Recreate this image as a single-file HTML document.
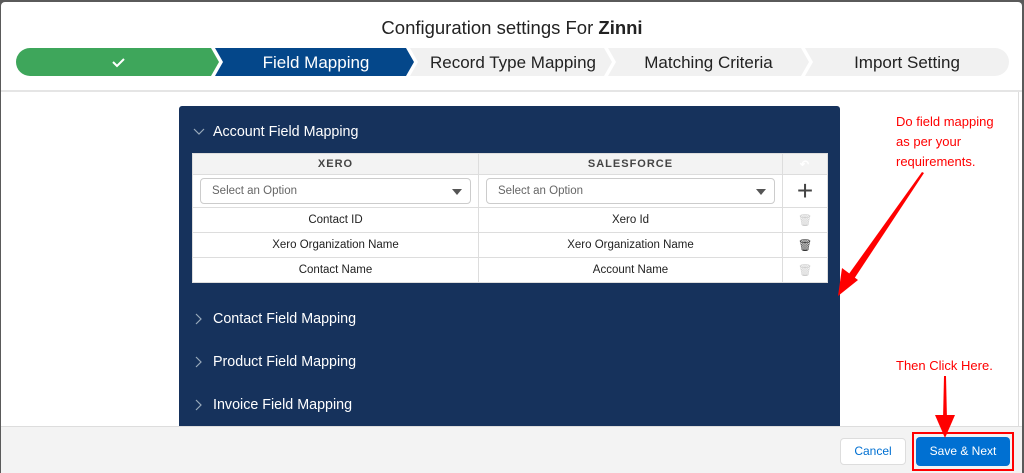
<!DOCTYPE html>
<html><head><style>
*{box-sizing:border-box;margin:0;padding:0}
body{width:1024px;height:473px;background:#5a5a5a;font-family:"Liberation Sans",sans-serif;position:relative;overflow:hidden}
.modal{position:absolute;left:1px;top:2px;width:1021px;height:471px;background:#fff;border-radius:4px 4px 0 0;overflow:hidden}
.title{position:absolute;top:15px;left:0;width:1022px;text-align:center;font-size:18.5px;color:#222}
.step{position:absolute;top:47px;height:28px;font-size:17px;line-height:28px;text-align:center}
.body{position:absolute;top:88px;left:0;width:1021px;height:336px;border-top:2px solid #e5e5e5}
.footer{position:absolute;top:424px;left:0;width:1021px;height:49px;background:#f3f3f3;border-top:1px solid #ddd}
.panel{position:absolute;left:178px;top:104px;width:661px;height:330px;background:#16325c;border-radius:3px}
.sec{position:absolute;left:34px;color:#fff;font-size:14.3px}
table{position:absolute;left:13px;top:47px;width:636px;border-collapse:collapse;background:#fff;font-size:11.5px;color:#222}
td,th{border:1px solid #ddd;text-align:center}
th{background:#f3f3f3;height:21px;font-size:11px;letter-spacing:1px;color:#444}
td{height:25px}
.sel{height:26px;margin:3px 7px;border:1px solid #ccc;border-radius:4px;text-align:left;padding-left:11px;line-height:24px;color:#666;font-size:11.5px;position:relative}
.sel:after{content:"";position:absolute;right:8px;top:10px;border:5px solid transparent;border-top:6px solid #555}
.red{position:absolute;color:#f00;font-size:13px;line-height:20px}
</style></head><body>
<div class="modal">
<div class="title">Configuration settings For <b>Zinni</b></div>
<svg style="position:absolute;left:0;top:0" width="1021" height="90">
<path d="M29 46 H210 L218 60 L210 74 H29 A14 14 0 0 1 29 46Z" fill="#3ea65b"/>
<path d="M112 60 l4 4 l7 -7" stroke="#fff" stroke-width="2" fill="none"/>
<path d="M214 46 H405 L413 60 L405 74 H214 L222 60Z" fill="#04478a"/>
<path d="M409 46 H603 L611 60 L603 74 H409 L417 60Z" fill="#f1f1f1"/>
<path d="M607 46 H800 L808 60 L800 74 H607 L615 60Z" fill="#f1f1f1"/>
<path d="M804 46 H994 A14 14 0 0 1 994 74 H804 L812 60Z" fill="#f1f1f1"/>
</svg>
<div class="step" style="left:218px;width:194px;color:#fff">Field Mapping</div>
<div class="step" style="left:413px;width:198px;color:#222">Record Type Mapping</div>
<div class="step" style="left:611px;width:193px;color:#222">Matching Criteria</div>
<div class="step" style="left:808px;width:196px;color:#222">Import Setting</div>
<div class="body"></div>
<div style="position:absolute;left:1017px;top:90px;width:1px;height:334px;background:#ddd"></div>
<div class="panel">
<svg style="position:absolute;left:14px;top:22px" width="12" height="8"><path d="M1 1 L6 6 L11 1" stroke="#9ab" fill="none" stroke-width="1.2"/></svg>
<div class="sec" style="top:18px">Account Field Mapping</div>
<table>
<tr><th style="width:286px">XERO</th><th style="width:304px">SALESFORCE</th><th style="color:#fff">&#8630;</th></tr>
<tr><td><div class="sel">Select an Option</div></td><td><div class="sel">Select an Option</div></td><td style="font-size:28px;color:#444;font-weight:300">+</td></tr>
<tr><td>Contact ID</td><td>Xero Id</td><td style="color:#ccc">&#128465;</td></tr>
<tr><td>Xero Organization Name</td><td>Xero Organization Name</td><td style="color:#333">&#128465;</td></tr>
<tr><td>Contact Name</td><td>Account Name</td><td style="color:#ccc">&#128465;</td></tr>
</table>
<svg style="position:absolute;left:16px;top:207px" width="8" height="12"><path d="M1 1 L6 6 L1 11" stroke="#9ab" fill="none" stroke-width="1.2"/></svg>
<div class="sec" style="top:205px">Contact Field Mapping</div>
<svg style="position:absolute;left:16px;top:250px" width="8" height="12"><path d="M1 1 L6 6 L1 11" stroke="#9ab" fill="none" stroke-width="1.2"/></svg>
<div class="sec" style="top:248px">Product Field Mapping</div>
<svg style="position:absolute;left:16px;top:293px" width="8" height="12"><path d="M1 1 L6 6 L1 11" stroke="#9ab" fill="none" stroke-width="1.2"/></svg>
<div class="sec" style="top:291px">Invoice Field Mapping</div>
</div>
<div class="footer">
<div style="position:absolute;left:839px;top:11px;width:66px;height:27px;border:1px solid #ddd;border-radius:4px;background:#fff;color:#0070d2;font-size:12px;text-align:center;line-height:25px">Cancel</div>
<div style="position:absolute;left:911px;top:5px;width:102px;height:39px;border:2px solid #f00"></div>
<div style="position:absolute;left:915px;top:10px;width:94px;height:29px;border-radius:4px;background:#0070d2;color:#fff;font-size:12px;text-align:center;line-height:29px">Save &amp; Next</div>
</div>
</div>
<div class="red" style="left:896px;top:112px">Do field mapping<br>as per your<br>requirements.</div>
<div class="red" style="left:896px;top:356px">Then Click Here.</div>
<svg style="position:absolute;left:0;top:0" width="1024" height="473">
<path d="M922 172 L924 173 L852 282 L846 278Z" fill="#f00"/>
<path d="M838 296 L842 268 L858 280Z" fill="#f00"/>
<path d="M944 376 H946 L947 420 H943Z" fill="#f00"/>
<path d="M945 438 L935 415 L955 415Z" fill="#f00"/>
</svg>
</body></html>
